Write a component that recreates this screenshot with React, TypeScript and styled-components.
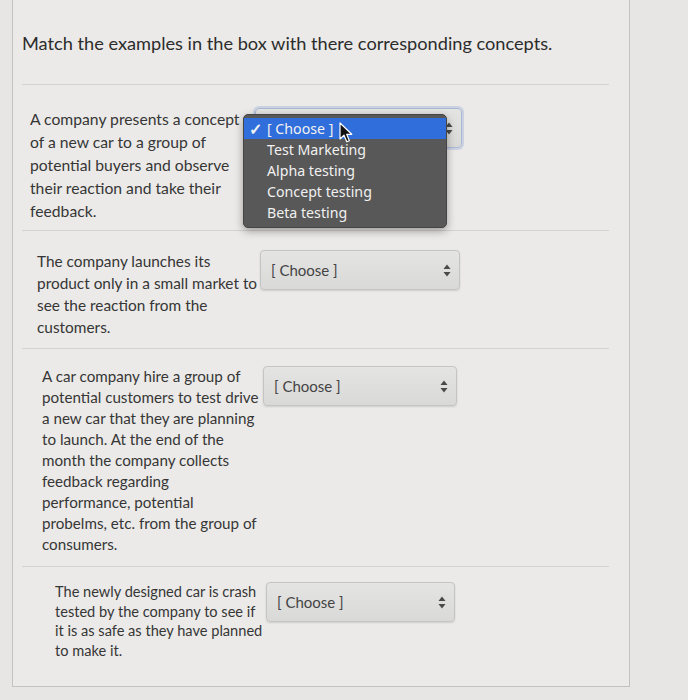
import React from 'react';
import styled, { createGlobalStyle, css } from 'styled-components';

const GlobalStyle = createGlobalStyle`
    body {
        margin: 0;
        background: #e7e6e4;
        font-family: Lato, 'Open Sans', sans-serif;
        color: #3b3b3b;
    }
`;

const questions = [
    {
        lines: [
            'A company presents a concept',
            'of a new car to a group of',
            'potential buyers and observe',
            'their reaction and take their',
            'feedback.',
        ],
        indent: 8,
        textWidth: 225,
        size: 15.7,
        lh: 23,
        top: 23,
        bottom: 7,
        selectWidth: 207,
        open: true,
    },
    {
        lines: ['The company launches its', 'product only in a small market to', 'see the reaction from the', 'customers.'],
        indent: 15,
        textWidth: 223,
        size: 15.4,
        lh: 22,
        top: 19,
        bottom: 10,
        selectWidth: 200,
    },
    {
        lines: [
            'A car company hire a group of',
            'potential customers to test drive',
            'a new car that they are planning',
            'to launch. At the end of the',
            'month the company collects',
            'feedback regarding',
            'performance, potential',
            'probelms, etc. from the group of',
            'consumers.',
        ],
        indent: 20,
        textWidth: 221,
        size: 15.2,
        lh: 21,
        top: 17,
        bottom: 11,
        selectWidth: 194,
    },
    {
        lines: [
            'The newly designed car is crash',
            'tested by the company to see if',
            'it is as safe as they have planned',
            'to make it.',
        ],
        indent: 33,
        textWidth: 211,
        size: 14.6,
        lh: 19.5,
        top: 15,
        bottom: 26,
        selectWidth: 189,
        last: true,
    },
];

const options = ['[ Choose ]', 'Test Marketing', 'Alpha testing', 'Concept testing', 'Beta testing'];

const Panel = styled.div`
    margin-left: 12px;
    width: 616px;
    border: 1px solid #c3c2c0;
    border-top: none;
    background: #ebeae8;
`;

const Header = styled.div`
    margin: 0 20px 0 9px;
    padding: 30px 0 28px 0;
    border-bottom: 1px solid #d4d3d1;
`;

const Title = styled.h1`
    margin: 0;
    font-size: 18.2px;
    line-height: 26px;
    font-weight: 400;
    color: #2c2c2c;
`;

const Row = styled.div<{ $indent: number; $textWidth: number; $top: number; $bottom: number; $last?: boolean }>`
    display: grid;
    grid-template-columns: ${(p) => p.$textWidth}px auto;
    align-items: start;
    margin: 0 20px 0 9px;
    padding: ${(p) => p.$top}px 0 ${(p) => p.$bottom}px ${(p) => p.$indent}px;
    border-bottom: ${(p) => (p.$last ? 'none' : '1px solid #d4d3d1')};
`;

const Text = styled.div<{ $size: number; $lh: number }>`
    font-size: ${(p) => p.$size}px;
    line-height: ${(p) => p.$lh}px;
    color: #363636;
`;

const Line = styled.div`
    white-space: nowrap;
`;

const SelectWrap = styled.div`
    position: relative;
`;

const Select = styled.div<{ $width: number; $focus?: boolean }>`
    display: flex;
    align-items: center;
    justify-content: space-between;
    box-sizing: border-box;
    width: ${(p) => p.$width}px;
    height: 40px;
    padding: 0 8px 0 10px;
    border: 1px solid #c4c4c4;
    border-radius: 4px;
    background: linear-gradient(#e4e4e3, #d9d9d8);
    box-shadow: 0 1px 2px rgba(0, 0, 0, 0.12);
    font-size: 15px;
    color: #444;
    ${(p) =>
        p.$focus &&
        css`
            border-color: #a9b8d4;
            box-shadow: 0 0 0 2px rgba(140, 165, 215, 0.35);
        `}
`;

const Label = styled.span<{ $hidden?: boolean }>`
    visibility: ${(p) => (p.$hidden ? 'hidden' : 'visible')};
`;

const Menu = styled.div`
    position: absolute;
    left: -12px;
    top: 6px;
    width: 204px;
    padding: 3px 0 4px;
    box-sizing: border-box;
    background: #585858;
    border: 1px solid #454545;
    border-radius: 5px;
    box-shadow: 0 3px 8px rgba(0, 0, 0, 0.35);
    font-family: 'Noto Sans', Roboto, sans-serif;
    z-index: 2;
`;

const Option = styled.div<{ $active?: boolean }>`
    position: relative;
    display: flex;
    align-items: center;
    height: 21px;
    padding-left: 23px;
    font-size: 14.2px;
    color: #f1f1f1;
    background: ${(p) => (p.$active ? '#2f6edb' : 'transparent')};
`;

const Check = styled.span`
    position: absolute;
    left: 5px;
    font-size: 16px;
    font-weight: 700;
`;

const Cursor = styled.svg`
    position: absolute;
    left: 95px;
    top: 4px;
`;

const Arrows = () => (
    <svg width="8" height="13" viewBox="0 0 8 13">
        <path d="M4 0.5 L7.5 5 L0.5 5 Z" fill="#4a4a4a" />
        <path d="M4 12.5 L7.5 8 L0.5 8 Z" fill="#4a4a4a" />
    </svg>
);

const Dropdown = () => (
    <Menu>
        {options.map((o, i) => (
            <Option key={o} $active={i === 0}>
                {i === 0 && <Check>✓</Check>}
                {o}
                {i === 0 && (
                    <Cursor width="14" height="22" viewBox="0 0 14 22">
                        <path
                            d="M1 1 L1 17 L5 13.2 L7.8 19.8 L10.4 18.7 L7.7 12.3 L12.8 12.3 Z"
                            fill="#111"
                            stroke="#fff"
                            strokeWidth="1.2"
                            strokeLinejoin="round"
                        />
                    </Cursor>
                )}
            </Option>
        ))}
    </Menu>
);

const App = () => (
    <>
        <GlobalStyle />
        <Panel>
            <Header>
                <Title>Match the examples in the box with there corresponding concepts.</Title>
            </Header>
            {questions.map((q, i) => (
                <Row key={i} $indent={q.indent} $textWidth={q.textWidth} $top={q.top} $bottom={q.bottom} $last={q.last}>
                    <Text $size={q.size} $lh={q.lh}>
                        {q.lines.map((l) => (
                            <Line key={l}>{l}</Line>
                        ))}
                    </Text>
                    <SelectWrap>
                        <Select $width={q.selectWidth} $focus={q.open}>
                            <Label $hidden={q.open}>[ Choose ]</Label>
                            <Arrows />
                        </Select>
                        {q.open && <Dropdown />}
                    </SelectWrap>
                </Row>
            ))}
        </Panel>
    </>
);

export default App;
